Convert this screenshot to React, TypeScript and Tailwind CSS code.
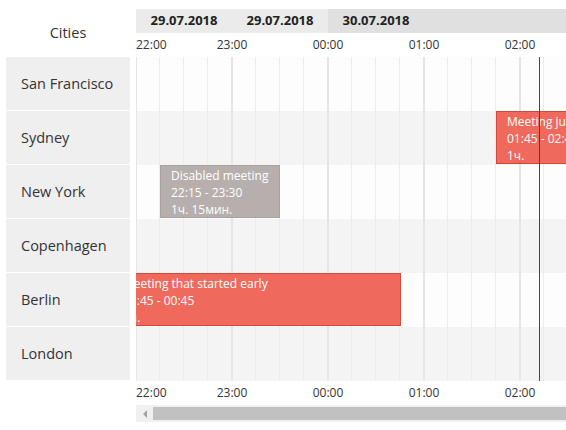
import React from "react";

const cities = ["San Francisco", "Sydney", "New York", "Copenhagen", "Berlin", "London"];
const hours = ["22:00", "23:00", "00:00", "01:00", "02:00"];

function TimeLabels() {
  return (
    <div className="flex h-[24px] items-center text-[12px] text-[#333]">
      {hours.map((h, i) => (
        <div key={h} className="w-[96px] shrink-0">
          <span className={i === 0 ? "inline-block" : "inline-block -translate-x-1/2"}>{h}</span>
        </div>
      ))}
    </div>
  );
}

function GridLines() {
  const cols = [];
  for (let i = 0; i < 20; i++) {
    const isHour = i % 4 === 0;
    cols.push(
      <div
        key={i}
        className={
          isHour
            ? "w-[24px] shrink-0 border-l-2 border-[#e5e5e5]"
            : "w-[24px] shrink-0 border-l border-[#ececec]"
        }
      />
    );
  }
  return <div className="absolute inset-0 flex -ml-[1px]">{cols}</div>;
}

export default function App() {
  return (
    <div className="w-[566px] h-[430px] bg-white overflow-hidden" style={{ fontFamily: '"Open Sans", "Noto Sans", sans-serif' }}>
      <div className="flex">
        {/* Left column */}
        <div className="ml-[6px] w-[124px] shrink-0 flex flex-col">
          <div className="h-[57px] flex items-center justify-center pt-[9px] text-[14.5px] text-[#333]">Cities</div>
          {cities.map((c) => (
            <div key={c} className="h-[54px] pb-[1px]">
              <div className="h-full bg-[#efefef] flex items-center pl-[15px] text-[14.5px] text-[#333]">{c}</div>
            </div>
          ))}
        </div>

        {/* Timeline */}
        <div className="ml-[6px] w-[430px] shrink-0 overflow-hidden flex flex-col">
          <div className="h-[9px]" />
          <div className="flex h-[24px] text-[13px] font-bold text-[#222]">
            <div className="w-[96px] shrink-0 bg-[#ebebeb] flex items-center justify-center">29.07.2018</div>
            <div className="w-[96px] shrink-0 bg-[#ebebeb] flex items-center justify-center">29.07.2018</div>
            <div className="w-[96px] shrink-0 bg-[#e0e0e0] flex items-center justify-center">30.07.2018</div>
            <div className="w-[96px] shrink-0 bg-[#e0e0e0]" />
            <div className="w-[96px] shrink-0 bg-[#e0e0e0]" />
          </div>
          <TimeLabels />

          <div className="relative h-[324px] w-[480px]">
            <div className="flex flex-col">
              {cities.map((c, i) => (
                <div key={c} className={i % 2 === 0 ? "h-[54px] bg-[#fdfdfd]" : "h-[54px] bg-[#f4f4f4]"} />
              ))}
            </div>
            <GridLines />

            {/* Sydney event */}
            <div className="absolute left-[360px] top-[54px] w-[96px] h-[53px] bg-[#ef6a5d] border border-[#d9473b] text-white text-[12px] leading-[17px] pl-[10px] pt-[1px] whitespace-nowrap overflow-hidden">
              <div>Meeting just started</div>
              <div>01:45 - 02:45</div>
              <div>1ч.</div>
            </div>

            {/* New York disabled */}
            <div className="absolute left-[24px] top-[108px] w-[120px] h-[53px] bg-[#b7afad] border border-[#a9a19f] text-white text-[12px] leading-[17px] pl-[10px] pt-[1px] whitespace-nowrap overflow-hidden">
              <div>Disabled meeting</div>
              <div>22:15 - 23:30</div>
              <div>1ч. 15мин.</div>
            </div>

            {/* Berlin event */}
            <div className="absolute left-[-24px] top-[216px] w-[289px] h-[53px] bg-[#ef6a5d] border border-[#d9473b] text-white text-[12px] leading-[17px] pl-[10px] pt-[1px] whitespace-nowrap overflow-hidden">
              <div>Meeting that started early</div>
              <div>21:45 - 00:45</div>
              <div>3ч.</div>
            </div>

            {/* current time */}
            <div className="absolute left-[403px] top-0 h-[324px] w-px bg-red-600" />
          </div>

          <TimeLabels />

          <div className="flex h-[17px] bg-[#f0f0f0] items-center">
            <div className="w-[17px] shrink-0 flex items-center justify-center">
              <svg width="6" height="8" viewBox="0 0 6 8">
                <path d="M5 0 L1 4 L5 8 Z" fill="#a3a3a3" />
              </svg>
            </div>
            <div className="flex-1 h-[13px] bg-[#c1c1c1]" />
          </div>
        </div>
      </div>
    </div>
  );
}
